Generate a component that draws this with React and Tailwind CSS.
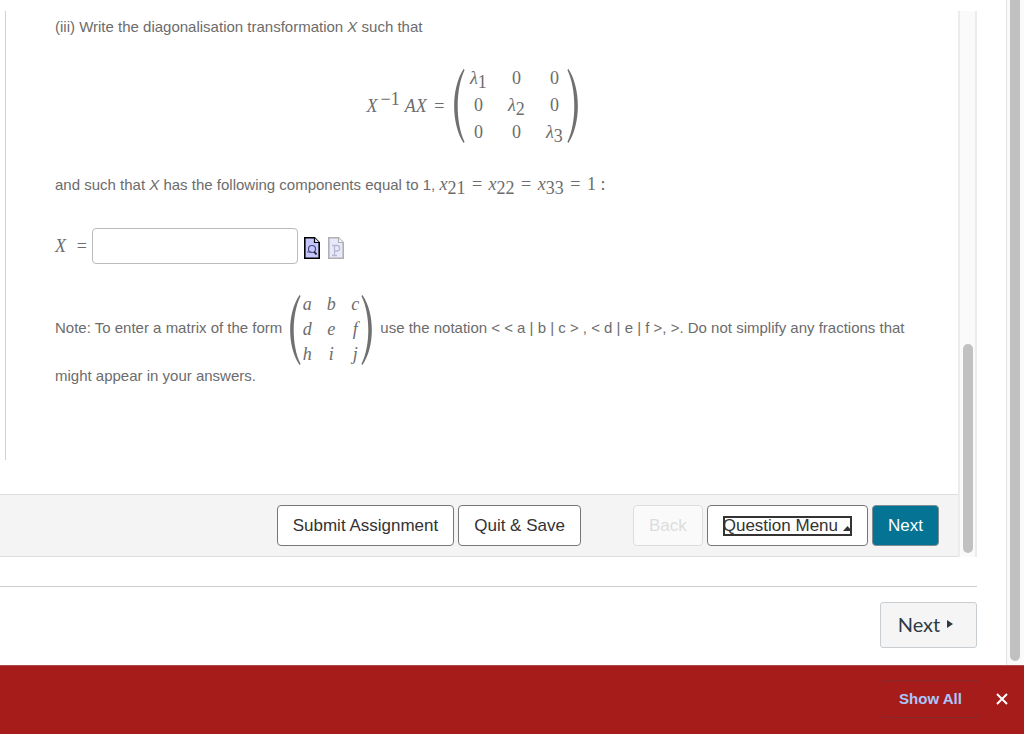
import React from "react";

const serif = "font-['Liberation_Serif','Times_New_Roman',serif]";

function Paren({ flip = false, className = "" }) {
  return (
    <svg
      viewBox="0 0 11 74"
      preserveAspectRatio="none"
      aria-hidden="true"
      className={`w-[11px] shrink-0 fill-[#707070] ${flip ? "-scale-x-100" : ""} ${className}`}
    >
      <path d="M9.6 0 C-3 19 -3 55 9.6 74 L10.6 73 C1.4 54 1.4 20 10.6 1 Z" />
    </svg>
  );
}

function Sub({ base, n }) {
  return (
    <span>
      <i>{base}</i>
      <sub className="relative top-[4px] align-baseline text-[18px] leading-none">{n}</sub>
    </span>
  );
}

function LambdaMatrix() {
  const cells = [1, 0, 0, 0, 2, 0, 0, 0, 3];
  return (
    <span className="flex items-center">
      <Paren className="h-[74px]" />
      <span className="-mx-[6px] grid grid-cols-[38px_38px_38px] justify-items-center leading-[27px]">
        {cells.map((n, i) => (
          <span key={i}>{n ? <Sub base="λ" n={n} /> : "0"}</span>
        ))}
      </span>
      <Paren flip className="h-[74px]" />
    </span>
  );
}

function LetterMatrix() {
  return (
    <span className={`-my-[2px] mx-[8px] inline-flex items-center align-middle text-[18px] italic ${serif}`}>
      <Paren className="h-[70px]" />
      <span className="-mx-[6px] grid grid-cols-[24px_24px_24px] justify-items-center leading-[25px]">
        {["a", "b", "c", "d", "e", "f", "h", "i", "j"].map((c) => (
          <span key={c}>{c}</span>
        ))}
      </span>
      <Paren flip className="h-[70px]" />
    </span>
  );
}

function PageIcon({ children, stroke, fill, fold }) {
  return (
    <svg viewBox="0 0 16 22" className="h-[22px] w-4" aria-hidden="true">
      <path d="M.8 .8 H10.5 L15.2 5.5 V21.2 H.8 Z" fill={fill} stroke={stroke} strokeWidth="1.6" />
      <path d="M10.5 .8 V5.5 H15.2" fill={fold} stroke={stroke} strokeWidth="1.2" />
      {children}
    </svg>
  );
}

const toolButton =
  "h-[41px] rounded-[4px] border px-[15px] text-[17px] leading-none whitespace-nowrap";

export default function App() {
  return (
    <div className="flex min-h-screen flex-col bg-white font-['Liberation_Sans',Arial,sans-serif] text-[#6c6c6c]">
      <div className="flex flex-1">
        <main className="flex min-w-0 flex-1 flex-col pt-[11px] pr-[29px]">
          <div className="flex">
            <div className="min-w-0 flex-1">
              <section className="ml-[5px] min-h-[449px] border-l border-[#d0d0d0] pt-[5px] pr-[44px] pl-[49px] text-[15px] leading-[22px]">
                <p>
                  (iii) Write the diagonalisation transformation <i>X</i> such that
                </p>
                <div className={`mt-[27px] mr-6 flex items-center justify-center text-[18px] ${serif}`}>
                  <span className="mr-[10px]">
                    <i>X</i>
                    <sup className="relative -top-[7px] ml-[3px] align-baseline text-[18px] leading-none">
                      −1
                    </sup>
                    <i className="mr-[3px] ml-[5px]">AX</i> =
                  </span>
                  <LambdaMatrix />
                </div>
                <p className="mt-[28px]">
                  and such that <i>X</i> has the following components equal to 1,{" "}
                  <span className={`text-[18px] leading-none ${serif}`}>
                    <Sub base="x" n="21" /> <span className="mx-[2px]">=</span> <Sub base="x" n="22" />{" "}
                    <span className="mx-[2px]">=</span> <Sub base="x" n="33" />{" "}
                    <span className="mx-[2px]">=</span> 1 :
                  </span>
                </p>
                <div className="mt-8 flex items-center">
                  <label
                    htmlFor="answer"
                    className={`flex w-[37px] justify-between pr-[5px] text-[18px] ${serif}`}
                  >
                    <i>X</i>
                    <span>=</span>
                  </label>
                  <input
                    id="answer"
                    type="text"
                    className="h-9 w-[206px] rounded-[4px] border border-[#bbb] bg-white px-2 outline-none"
                  />
                  <button type="button" aria-label="Preview" className="mt-1 ml-[6px]">
                    <PageIcon stroke="#000" fill="#c6c6ff" fold="#e4e4ff">
                      <circle cx="8" cy="12" r="3.5" fill="none" stroke="#44447a" strokeWidth="1.1" />
                      <path d="M10.2 14.8 L12.5 17.5" stroke="#222" strokeWidth="1.8" />
                      <path d="M3 15 H7.5" stroke="#55558a" />
                    </PageIcon>
                  </button>
                  <button type="button" aria-label="Plot" className="mt-1 ml-2" disabled>
                    <PageIcon stroke="#b0b0b0" fill="#e8e8ff" fold="#f4f4ff">
                      <path
                        d="M4 8.5 H9 C12.6 8.5 12.6 14 9 14 H6.5 M6.5 8.5 V18.5 M4 18.5 H9"
                        fill="none"
                        stroke="#b8b8cc"
                        strokeWidth="1.3"
                      />
                    </PageIcon>
                  </button>
                </div>
                <p className="mt-[30px]">
                  Note: To enter a matrix of the form
                  <LetterMatrix />
                  use the notation &lt; &lt; a | b | c &gt; , &lt; d | e | f &gt;, &gt;. Do not simplify any
                  fractions that might appear in your answers.
                </p>
              </section>
              <div className="mt-[34px] flex h-[63px] items-center border-y border-[#ddd] bg-[#f4f4f4] pr-[19px] text-[#333]">
                <div className="ml-auto flex gap-[4px]">
                  <button type="button" className={`${toolButton} border-[#777] bg-white`}>
                    Submit Assignment
                  </button>
                  <button type="button" className={`${toolButton} border-[#777] bg-white`}>
                    Quit &amp; Save
                  </button>
                </div>
                <div className="ml-[52px] flex gap-[4px]">
                  <button
                    type="button"
                    disabled
                    className={`${toolButton} border-[#ddd] bg-[#fafafa] text-[#ddd]`}
                  >
                    Back
                  </button>
                  <button type="button" className={`${toolButton} border-[#777] bg-white`}>
                    <span className="flex h-5 items-center gap-[5px] outline-2 -outline-offset-2 outline-[#333]">
                      Question Menu
                      <svg viewBox="0 0 9 5" className="mt-[5px] h-[5px] w-[9px]" aria-hidden="true">
                        <path d="M0 5 L4.5 0 L9 5 Z" fill="#333" />
                      </svg>
                    </span>
                  </button>
                  <button type="button" className={`${toolButton} border-[#7f8c90] bg-[#047394] text-white`}>
                    Next
                  </button>
                </div>
              </div>
            </div>
            <div className="flex w-[19px] items-end justify-center border-x-2 border-[#ececec] bg-[#fafafa] pb-1">
              <div className="h-[209px] w-[10px] rounded-full bg-[#c1c1c1]" />
            </div>
          </div>
          <div className="mt-[29px] flex justify-end border-t border-[#c7cdd1] pt-[15px] pb-[17px]">
            <button
              type="button"
              className="flex h-[46px] w-[97px] items-center justify-center gap-[7px] rounded-[3px] border border-[#c7cdd1] bg-[#f5f5f5] pr-[6px] pb-[2px] font-[Lato,sans-serif] text-[20px] text-[#2d3b45]"
            >
              Next
              <svg viewBox="0 0 6 8" className="h-2 w-[6px]" aria-hidden="true">
                <path d="M0 0 L6 4 L0 8 Z" fill="#2d3b45" />
              </svg>
            </button>
          </div>
        </main>
        <div className="flex w-[18px] shrink-0 border-l border-[#e2e2e2] bg-[#fafafa] pb-1 pl-[3px]">
          <div className="w-[10px] rounded-b-full bg-[#c1c1c1]" />
        </div>
      </div>
      <footer className="flex h-[69px] shrink-0 items-center justify-end border-t border-[#b04a48] bg-[#a61c1a] pr-4 pb-[2px]">
        <button
          type="button"
          className="h-[38px] w-[99px] rounded-[4px] border border-[#84282a] text-[15px] font-bold text-[#a8c7fa]"
        >
          Show All
        </button>
        <button type="button" aria-label="Close" className="ml-[16px]">
          <svg viewBox="0 0 12 12" className="h-3 w-3" aria-hidden="true">
            <path d="M1 1 L11 11 M11 1 L1 11" stroke="#fff" strokeWidth="2" />
          </svg>
        </button>
      </footer>
    </div>
  );
}
